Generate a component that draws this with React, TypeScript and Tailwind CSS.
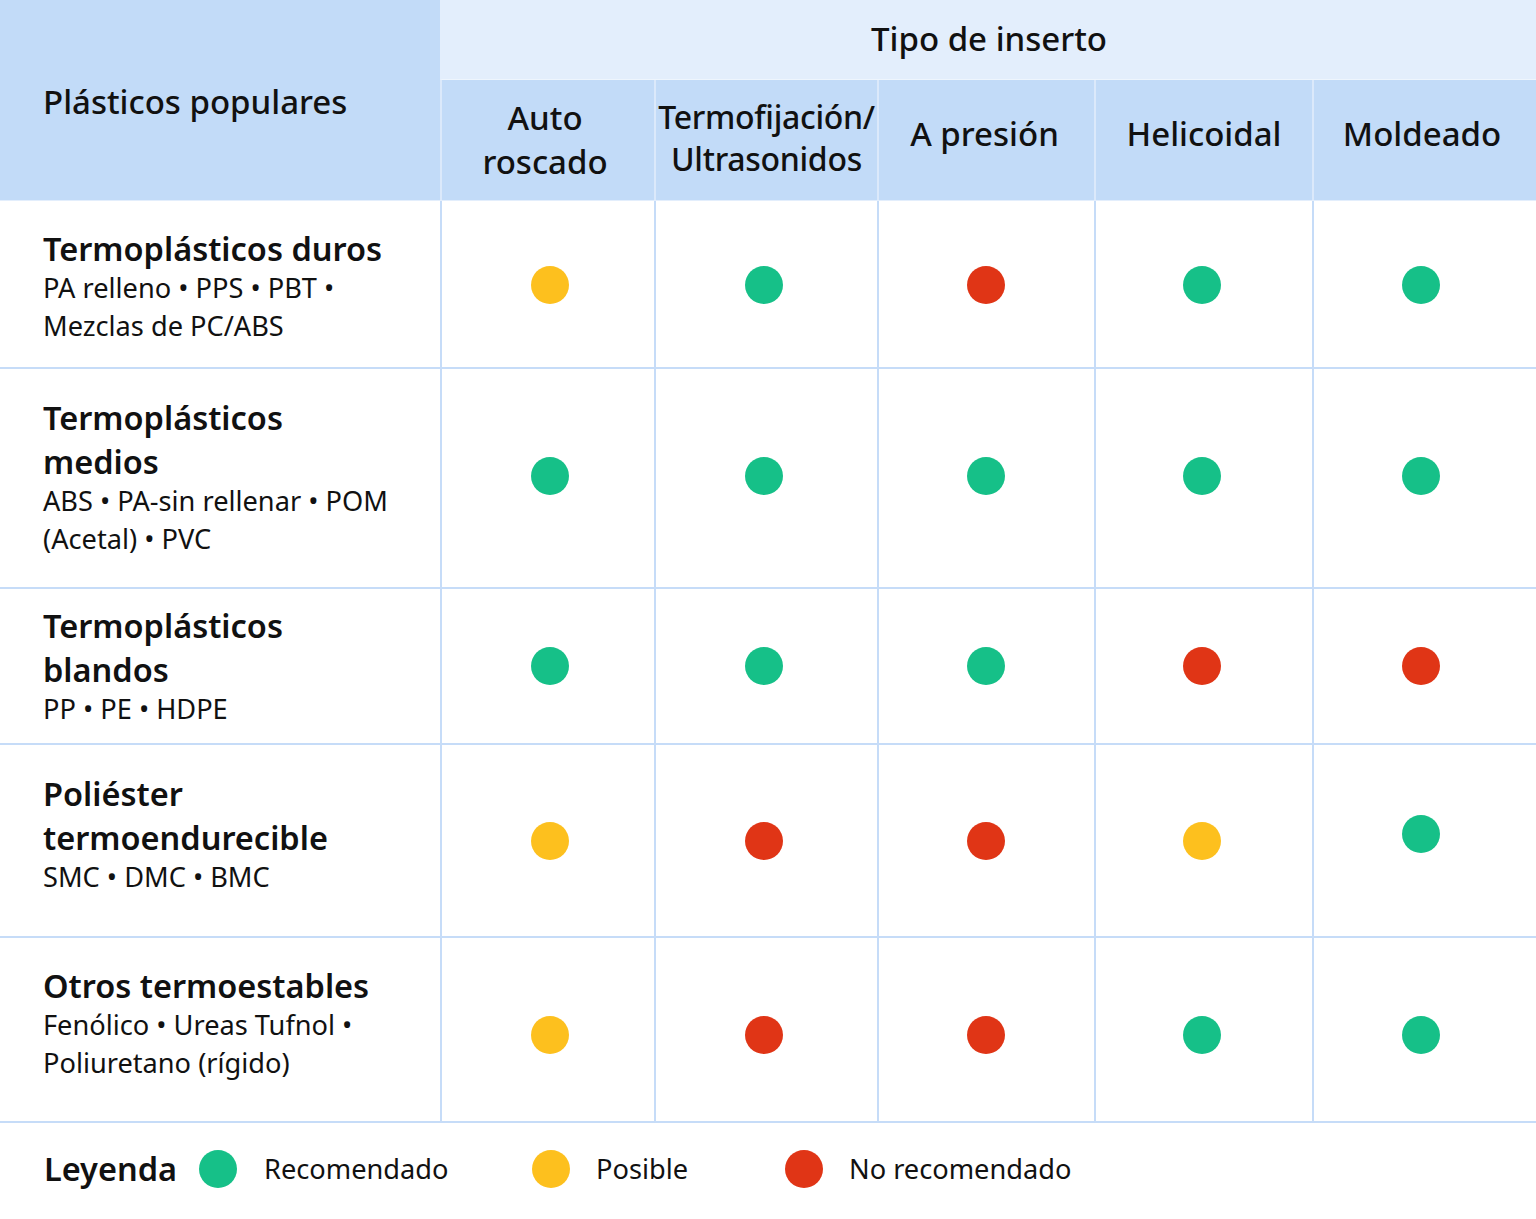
import React from "react";

type C = "g" | "y" | "r";

const dotColor: Record<C, string> = {
  g: "bg-[#16c088]",
  y: "bg-[#fdc01e]",
  r: "bg-[#e03516]",
};

function Dot({ c, extra = "" }: { c: C; extra?: string }) {
  return <span className={`block shrink-0 w-[38px] h-[38px] rounded-full ${dotColor[c]} ${extra}`} />;
}

const rows: {
  title: React.ReactNode;
  sub: React.ReactNode;
  h: string;
  pad: string;
  dotPad: string;
  dots: C[];
}[] = [
  {
    title: "Termoplásticos duros",
    sub: (
      <>
        PA relleno • PPS • PBT •<br />
        Mezclas de PC/ABS
      </>
    ),
    h: "h-[169px]",
    pad: "pt-[3px]",
    dotPad: "pt-[2px]",
    dots: ["y", "g", "r", "g", "g"],
  },
  {
    title: (
      <>
        Termoplásticos
        <br />
        medios
      </>
    ),
    sub: (
      <>
        ABS • PA-sin rellenar • POM
        <br />
        (Acetal) • PVC
      </>
    ),
    h: "h-[220px]",
    pad: "pb-[3px]",
    dotPad: "pb-[4px]",
    dots: ["g", "g", "g", "g", "g"],
  },
  {
    title: (
      <>
        Termoplásticos
        <br />
        blandos
      </>
    ),
    sub: <>PP • PE • HDPE</>,
    h: "h-[156px]",
    pad: "pt-0",
    dotPad: "",
    dots: ["g", "g", "g", "r", "r"],
  },
  {
    title: (
      <>
        Poliéster
        <br />
        termoendurecible
      </>
    ),
    sub: <>SMC • DMC • BMC</>,
    h: "h-[193px]",
    pad: "pb-[13px]",
    dotPad: "",
    dots: ["y", "r", "r", "y", "g"],
  },
  {
    title: "Otros termoestables",
    sub: (
      <>
        Fenólico • Ureas Tufnol •<br />
        Poliuretano (rígido)
      </>
    ),
    h: "h-[185px]",
    pad: "pb-[13px]",
    dotPad: "pt-[10px]",
    dots: ["y", "r", "r", "g", "g"],
  },
];

const colPad = ["pl-[4px]", "pr-[5px]", "pr-[1px]", "pr-[4px]", "pr-[8px]"];

const cols = "grid grid-cols-[440px_214px_223px_217px_218px_224px]";
const head = "text-[33px] font-medium";
const head2 = "h-[120px] bg-[#c2dbf8] border-l-2 border-[#dbe9fb] flex items-center justify-center text-center";

export default function App() {
  return (
    <div
      className="w-[1536px] h-[1219px] bg-white text-[#111111] overflow-hidden"
      style={{ fontFamily: '"Noto Sans", "Open Sans", sans-serif' }}
    >
      {/* Header */}
      <div className={`${cols} h-[200px]`}>
        <div className={`row-span-2 bg-[#c2dbf8] flex items-center pl-[43px] pt-[4px] ${head}`}>
          Plásticos populares
        </div>
        <div
          className={`col-span-5 h-[80px] bg-[#e3eefc] flex items-center justify-center pb-[2px] border-l-2 border-b border-[#e3eefc] border-b-[#eef5fd] ${head}`}
        >
          Tipo de inserto
        </div>
        <div className={`${head2} leading-[44px] pr-[6px] ${head}`}>
          Auto
          <br />
          roscado
        </div>
        <div className={`${head2} leading-[42px] whitespace-nowrap pb-[4px] tracking-[-0.3px] text-[32px] font-medium`}>
          Termofijación/
          <br />
          Ultrasonidos
        </div>
        <div className={`${head2} pb-[12px] pr-[4px] ${head}`}>A presión</div>
        <div className={`${head2} pb-[12px] ${head}`}>Helicoidal</div>
        <div className={`${head2} pb-[12px] pr-[6px] ${head}`}>Moldeado</div>
      </div>

      {/* Body */}
      {rows.map((r, i) => (
        <div
          key={i}
          className={`${cols} ${r.h} border-b-2 border-[#c6dcf8] ${i === 0 ? "border-t border-t-[#e3eefc]" : ""}`}
        >
          <div className={`flex flex-col justify-center pl-[43px] ${r.pad}`}>
            <div className="text-[32.5px] font-semibold leading-[44px]">{r.title}</div>
            <div className="text-[27.2px] leading-[38px] whitespace-nowrap -mt-[2px]">{r.sub}</div>
          </div>
          {r.dots.map((d, j) => (
            <div
              key={j}
              className={`border-l-2 border-[#c6dcf8] flex items-center justify-center ${colPad[j]} ${r.dotPad}`}
            >
              <Dot c={d} extra={i === 3 && j === 4 ? "-mt-[14px]" : ""} />
            </div>
          ))}
        </div>
      ))}

      {/* Legend */}
      <div className="flex items-center h-[94px] pl-[44px] pb-[2px]">
        <span className="w-[155px] text-[32.5px] font-semibold">Leyenda</span>
        <Dot c="g" />
        <span className="w-[295px] pl-[27px] text-[27.2px]">Recomendado</span>
        <Dot c="y" />
        <span className="w-[215px] pl-[26px] text-[27.2px]">Posible</span>
        <Dot c="r" />
        <span className="pl-[26px] text-[27.2px]">No recomendado</span>
      </div>
    </div>
  );
}
